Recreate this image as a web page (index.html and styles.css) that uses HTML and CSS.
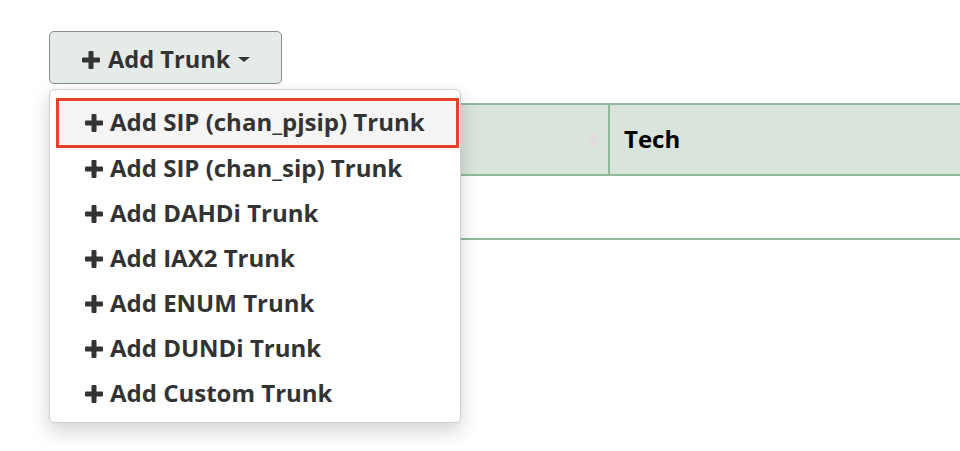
FILE: index.html
```html
<!DOCTYPE html>
<html>
<head>
<meta charset="utf-8">
<link rel="stylesheet" href="styles.css">
</head>
<body>
<div class="page">
  <div class="btn-group">
    <button class="btn">
      <svg class="plus" viewBox="0 0 18 18"><rect x="6.5" y="0" width="5" height="18" rx="1"/><rect x="0" y="6.5" width="18" height="5" rx="1"/></svg>
      <span>Add Trunk</span>
      <span class="caret"></span>
    </button>
    <ul class="menu">
      <li class="item active"><svg class="plus" viewBox="0 0 18 18"><rect x="6.5" y="0" width="5" height="18" rx="1"/><rect x="0" y="6.5" width="18" height="5" rx="1"/></svg>Add SIP (chan_pjsip) Trunk</li>
      <li class="item"><svg class="plus" viewBox="0 0 18 18"><rect x="6.5" y="0" width="5" height="18" rx="1"/><rect x="0" y="6.5" width="18" height="5" rx="1"/></svg>Add SIP (chan_sip) Trunk</li>
      <li class="item"><svg class="plus" viewBox="0 0 18 18"><rect x="6.5" y="0" width="5" height="18" rx="1"/><rect x="0" y="6.5" width="18" height="5" rx="1"/></svg>Add DAHDi Trunk</li>
      <li class="item"><svg class="plus" viewBox="0 0 18 18"><rect x="6.5" y="0" width="5" height="18" rx="1"/><rect x="0" y="6.5" width="18" height="5" rx="1"/></svg>Add IAX2 Trunk</li>
      <li class="item"><svg class="plus" viewBox="0 0 18 18"><rect x="6.5" y="0" width="5" height="18" rx="1"/><rect x="0" y="6.5" width="18" height="5" rx="1"/></svg>Add ENUM Trunk</li>
      <li class="item"><svg class="plus" viewBox="0 0 18 18"><rect x="6.5" y="0" width="5" height="18" rx="1"/><rect x="0" y="6.5" width="18" height="5" rx="1"/></svg>Add DUNDi Trunk</li>
      <li class="item"><svg class="plus" viewBox="0 0 18 18"><rect x="6.5" y="0" width="5" height="18" rx="1"/><rect x="0" y="6.5" width="18" height="5" rx="1"/></svg>Add Custom Trunk</li>
    </ul>
  </div>
  <div class="table-wrap">
    <table class="grid">
      <thead>
        <tr>
          <th class="col-name"><span class="sort"><span class="up"></span><span class="down"></span></span></th>
          <th class="col-tech">Tech</th>
        </tr>
      </thead>
      <tbody>
        <tr><td></td><td></td></tr>
      </tbody>
    </table>
  </div>
</div>
</body>
</html>
```

FILE: styles.css
```css
* { box-sizing: border-box; }
html, body { margin: 0; padding: 0; background: #fff; }
body {
  font-family: "Open Sans", "Liberation Sans", sans-serif;
  width: 960px;
  height: 451px;
  overflow: hidden;
}
.page {
  padding: 31px 0 0 49px;
}
.btn-group {
  position: relative;
}
.btn {
  display: flex;
  align-items: center;
  gap: 8px;
  width: 233px;
  height: 53px;
  padding: 3px 0 0 32px;
  background: #e5ebe6;
  border: 1px solid #8c8c8c;
  border-radius: 5px;
  font-family: inherit;
  font-weight: 700;
  font-size: 23.6px;
  color: #333;
}
.btn .plus { width: 18px; height: 18px; fill: #333; margin-top: 1px; }
.caret {
  width: 0; height: 0;
  border-left: 6px solid transparent;
  border-right: 6px solid transparent;
  border-top: 5px solid #333;
  margin-top: 1px;
}
.menu {
  position: absolute;
  top: 58px;
  left: 0;
  width: 412px;
  margin: 0;
  padding: 8px 0 6px;
  list-style: none;
  background: #fff;
  border: 1px solid #cfcfcf;
  border-radius: 5px;
  box-shadow: 0 8px 20px rgba(0,0,0,0.18);
  z-index: 2;
}
.item {
  display: flex;
  align-items: center;
  gap: 7px;
  height: 45px;
  padding: 0 0 3px 35px;
  font-size: 24px;
  font-weight: 700;
  color: #333;
  white-space: nowrap;
}
.item .plus { width: 18px; height: 18px; fill: #333; margin-top: 3px; }
.item.active {
  margin: 0 1px -2px 6px;
  padding-left: 26px;
  height: 50px;
  background: #f5f5f5;
  border: 3px solid #e8402a;
}
.table-wrap {
  margin-top: 19px;
  width: 911px;
  overflow: hidden;
}
.grid {
  width: 960px;
  border-collapse: collapse;
  font-size: 24px;
}
.grid th {
  height: 71px;
  background: #d9e5dc;
  border-top: 2px solid #8fbb9c;
  border-bottom: 2px solid #8fbb9c;
  text-align: left;
  font-weight: 700;
  color: #000;
  padding: 0 14px 3px;
}
.grid th.col-name {
  width: 559px;
  border-left: 2px solid #8fbb9c;
  border-right: 2px solid #8fbb9c;
  position: relative;
}
.grid td {
  height: 64px;
  border-bottom: 2px solid #8fbb9c;
}
.grid td:first-child { border-left: 2px solid #8fbb9c; }
.sort {
  position: absolute;
  right: 10px;
  top: 50%;
  transform: translateY(-50%);
  display: flex;
  flex-direction: column;
  gap: 2px;
}
.sort .up {
  border-left: 5px solid transparent;
  border-right: 5px solid transparent;
  border-bottom: 7px solid #e2d8dc;
}
.sort .down {
  border-left: 5px solid transparent;
  border-right: 5px solid transparent;
  border-top: 7px solid #e2d8dc;
}
```
